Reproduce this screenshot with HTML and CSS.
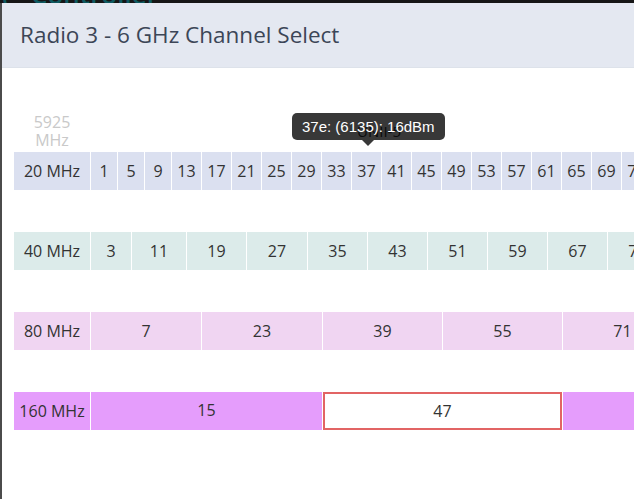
FILE: index.html
```html
<!DOCTYPE html>
<html lang="en">
<head>
<meta charset="utf-8">
<title>Radio 3 - 6 GHz Channel Select</title>
<link rel="stylesheet" href="styles.css">
</head>
<body>
<div class="backdrop"><span class="backdrop-title">( Controller</span></div>
<div class="modal">
  <div class="modal-header">
    <h2 class="modal-title">Radio 3 - 6 GHz Channel Select</h2>
  </div>
  <div class="modal-body">
    <div class="markers">
      <div class="freq-label">5925<br>MHz</div>
      <div class="band-label">UNII-5</div>
      <div class="tooltip">37e: (6135): 16dBm</div>
    </div>

    <div class="row row-20">
      <div class="label">20 MHz</div>
      <div class="ch narrow">1</div>
      <div class="ch narrow">5</div>
      <div class="ch narrow">9</div>
      <div class="ch">13</div>
      <div class="ch">17</div>
      <div class="ch">21</div>
      <div class="ch">25</div>
      <div class="ch">29</div>
      <div class="ch">33</div>
      <div class="ch">37</div>
      <div class="ch">41</div>
      <div class="ch">45</div>
      <div class="ch">49</div>
      <div class="ch">53</div>
      <div class="ch">57</div>
      <div class="ch">61</div>
      <div class="ch">65</div>
      <div class="ch">69</div>
      <div class="ch">73</div>
      <div class="ch">77</div>
      <div class="ch">81</div>
    </div>

    <div class="row row-40">
      <div class="label">40 MHz</div>
      <div class="ch">3</div>
      <div class="ch">11</div>
      <div class="ch">19</div>
      <div class="ch">27</div>
      <div class="ch">35</div>
      <div class="ch">43</div>
      <div class="ch">51</div>
      <div class="ch">59</div>
      <div class="ch">67</div>
      <div class="ch">75</div>
      <div class="ch">83</div>
    </div>

    <div class="row row-80">
      <div class="label">80 MHz</div>
      <div class="ch">7</div>
      <div class="ch">23</div>
      <div class="ch">39</div>
      <div class="ch">55</div>
      <div class="ch">71</div>
      <div class="ch">87</div>
    </div>

    <div class="row row-160">
      <div class="label">160 MHz</div>
      <div class="ch">15</div>
      <div class="ch selected">47</div>
      <div class="ch">79</div>
    </div>
  </div>
</div>
</body>
</html>
```

FILE: styles.css
```css
html, body {
  margin: 0;
  padding: 0;
}

body {
  background: #4b4b4b;
  overflow: hidden;
  width: 634px;
  height: 499px;
  font-family: "Open Sans", "DejaVu Sans", sans-serif;
  color: #333;
  position: relative;
}

.backdrop {
  position: absolute;
  top: 0;
  left: 0;
  width: 100%;
  height: 3px;
  background: #161616;
  overflow: hidden;
}

.backdrop-title {
  position: absolute;
  left: 2px;
  top: -19px;
  font-size: 26px;
  line-height: 26px;
  font-weight: 600;
  color: #0e5960;
  white-space: nowrap;
  word-spacing: 14px;
}

.modal {
  position: relative;
  margin: 3px 0 0 2px;
  width: 900px;
  height: 520px;
  background: #fff;
}

.modal-header {
  height: 64px;
  background: #e4e8f1;
  border-bottom: 1px solid #dde2ea;
  display: flex;
  align-items: center;
  padding-left: 18px;
}

.modal-title {
  margin: 0;
  font-size: 22.5px;
  font-weight: 400;
  color: #3c4657;
  line-height: 26px;
}

.modal-body {
  padding: 32px 0 0 12px;
}

.markers {
  position: relative;
  height: 52px;
  display: flex;
  align-items: flex-start;
}

.freq-label {
  width: 76px;
  margin-top: 13px;
  text-align: center;
  font-size: 16px;
  line-height: 18px;
  color: #c9c9c9;
}

.band-label {
  position: absolute;
  left: 343px;
  top: 22px;
  font-size: 15px;
  line-height: 18px;
  color: #333;
}

.tooltip {
  position: absolute;
  left: 278px;
  top: 13px;
  padding: 5px 10px;
  font-family: "Liberation Sans", Arial, sans-serif;
  font-size: 15px;
  line-height: 17px;
  color: #fff;
  background: rgba(0, 0, 0, 0.78);
  border-radius: 5px;
  white-space: nowrap;
}

.tooltip::after {
  content: "";
  position: absolute;
  top: 100%;
  left: 50%;
  margin-left: -6px;
  border-left: 6px solid transparent;
  border-right: 6px solid transparent;
  border-top: 6px solid rgba(0, 0, 0, 0.78);
}

.row {
  display: flex;
  gap: 1px;
  height: 38px;
  margin-bottom: 42px;
}

.label,
.ch {
  flex: none;
  display: flex;
  align-items: center;
  justify-content: center;
  font-size: 16px;
  color: #333;
  box-sizing: border-box;
}

.label {
  width: 76px;
}

.row-20 .label,
.row-20 .ch {
  background: #dbe0f0;
}

.row-20 .ch {
  width: 29px;
}

.row-20 .ch.narrow {
  width: 26px;
}

.row-40 .label,
.row-40 .ch {
  background: #dcebea;
}

.row-40 .ch {
  width: 59px;
}

.row-40 .ch:nth-child(2) {
  width: 40px;
}

.row-40 .ch:nth-child(3) {
  width: 54px;
}

.row-40 .ch:nth-child(5) {
  width: 60px;
}

.row-80 .label,
.row-80 .ch {
  background: #f0d5f2;
}

.row-80 .ch {
  width: 119px;
}

.row-80 .ch:nth-child(2) {
  width: 110px;
}

.row-80 .ch:nth-child(3) {
  width: 120px;
}

.row-160 .label,
.row-160 .ch {
  background: #e59dfc;
}

.row-160 .ch {
  width: 239px;
  padding-bottom: 2px;
}

.row-160 .ch:nth-child(2) {
  width: 231px;
}

.row-160 .ch.selected {
  background: #fff;
  border: 2px solid #e26464;
  padding-bottom: 0;
}
```
